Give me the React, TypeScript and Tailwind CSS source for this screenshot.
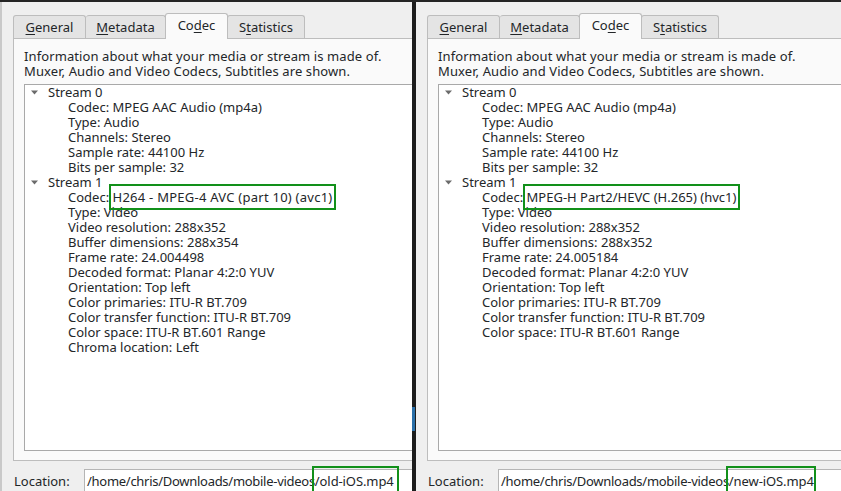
import React from "react";

type Row = { label: string; value?: string; boxed?: boolean };

const Arrow = () => (
  <svg width="7" height="5" viewBox="0 0 7 5" className="shrink-0">
    <path d="M0 0.5 L7 0.5 L3.5 4.5 Z" fill="#6b6b6b" />
  </svg>
);

function Tabs() {
  return (
    <div className="flex items-end shrink-0">
      <div className="w-[73px] h-[23px] bg-[#e4e4e4] border border-b-0 border-[#bdbdbd] rounded-t-[3px] flex items-center justify-center pt-[1px]">
        <span>
          <span className="underline underline-offset-2">G</span>eneral
        </span>
      </div>
      <div className="w-[80px] h-[23px] bg-[#e4e4e4] border border-b-0 border-l-0 border-[#bdbdbd] rounded-t-[3px] flex items-center justify-center pt-[1px]">
        <span>
          <span className="underline underline-offset-2">M</span>etadata
        </span>
      </div>
      <div className="relative z-10 w-[63px] h-[26px] -mb-px bg-[#fafafa] border border-b-0 border-[#bdbdbd] rounded-t-[3px] flex items-center justify-center pb-[2px] mx-[-1px]">
        <span>
          Co<span className="underline underline-offset-2">d</span>ec
        </span>
      </div>
      <div className="w-[78px] h-[23px] bg-[#e4e4e4] border border-b-0 border-[#bdbdbd] rounded-t-[3px] flex items-center justify-center pt-[1px]">
        <span>
          S<span className="underline underline-offset-2">t</span>atistics
        </span>
      </div>
    </div>
  );
}

function Stream({ title, rows, boxSpacing }: { title: string; rows: Row[]; boxSpacing: string }) {
  return (
    <div className="flex flex-col">
      <div className="flex items-center h-[15px] pl-[6px]">
        <Arrow />
        <span className="ml-[10px] whitespace-nowrap">{title}</span>
      </div>
      {rows.map((r, i) => (
        <div key={i} className="h-[15px] pl-[43px] whitespace-nowrap flex items-center">
          <span>{r.label}:&nbsp;</span>
          {r.boxed ? (
            <span className={"relative " + boxSpacing}>
              {r.value}
              <span className="absolute left-[-4px] right-[-4px] top-[-4px] bottom-[-3px] border-2 border-[#12901a]" />
            </span>
          ) : (
            <span>{r.value}</span>
          )}
        </div>
      ))}
    </div>
  );
}

function Window({
  leftBorder,
  codec,
  buffer,
  frame,
  chroma,
  file,
  className,
  boxSpacing,
  fileBox,
}: {
  leftBorder: boolean;
  codec: string;
  buffer: string;
  frame: string;
  chroma: boolean;
  file: string;
  className: string;
  boxSpacing: string;
  fileBox: string;
}) {
  const audio: Row[] = [
    { label: "Codec", value: "MPEG AAC Audio (mp4a)" },
    { label: "Type", value: "Audio" },
    { label: "Channels", value: "Stereo" },
    { label: "Sample rate", value: "44100 Hz" },
    { label: "Bits per sample", value: "32" },
  ];
  const video: Row[] = [
    { label: "Codec", value: codec, boxed: true },
    { label: "Type", value: "Video" },
    { label: "Video resolution", value: "288x352" },
    { label: "Buffer dimensions", value: buffer },
    { label: "Frame rate", value: frame },
    { label: "Decoded format", value: "Planar 4:2:0 YUV" },
    { label: "Orientation", value: "Top left" },
    { label: "Color primaries", value: "ITU-R BT.709" },
    { label: "Color transfer function", value: "ITU-R BT.709" },
    { label: "Color space", value: "ITU-R BT.601 Range" },
  ];
  if (chroma) video.push({ label: "Chroma location", value: "Left" });

  return (
    <div
      className={
        "bg-[#efefef] flex flex-col pt-[11px] pl-[11px] overflow-hidden " +
        (leftBorder ? "border-l-2 border-[#c9c9c9] " : "") +
        className
      }
    >
      <Tabs />
      <div className="h-[423px] shrink-0 border border-[#bdbdbd] bg-[#fafafa] flex flex-col pt-[10px] pl-[10px] pb-[9px] mr-[-1px]">
        <div className="leading-[15px] whitespace-nowrap tracking-[0.1px]">
          <div>Information about what your media or stream is made of.</div>
          <div>Muxer, Audio and Video Codecs, Subtitles are shown.</div>
        </div>
        <div className="mt-[5px] flex-1 border border-[#a9a9a9] bg-white mr-[-2px]">
          <Stream title="Stream 0" rows={audio} boxSpacing={boxSpacing} />
          <Stream title="Stream 1" rows={video} boxSpacing={boxSpacing} />
        </div>
      </div>
      <div className="mt-[8px] shrink-0 flex items-start">
        <div className="w-[71px] pl-[1px] pt-[5px] leading-[15px]">Location:</div>
        <div className="flex-1 h-[26px] border border-[#b5b5b5] bg-white pl-[2px] pt-[4px] leading-[15px] whitespace-nowrap mr-[-4px]">
          <span className="tracking-[-0.28px]">/home/chris/Downloads/mobile-videos</span>
          <span className="relative tracking-[-0.1px]">
            /{file}
            <span className={"absolute top-[-6px] bottom-[-8px] border-2 border-[#12901a] " + fileBox} />
          </span>
        </div>
      </div>
    </div>
  );
}

export default function App() {
  return (
    <div
      className="w-[841px] h-[491px] overflow-hidden bg-[#242424] pt-[2px] flex flex-col text-[13px] text-[#232629]"
      style={{ fontFamily: '"Noto Sans", "Open Sans", sans-serif' }}
    >
      <div className="flex flex-1 min-h-0">
        <Window
          leftBorder
          className="w-[412px] shrink-0"
          codec="H264 - MPEG-4 AVC (part 10) (avc1)"
          buffer="288x354"
          frame="24.004498"
          chroma
          file="old-iOS.mp4"
          boxSpacing="tracking-[0.25px]"
          fileBox="left-[-3px] right-[-5px]"
        />
        <div className="w-[4px] shrink-0 bg-[#1c1c1c] flex flex-col">
          <div className="h-[405px]" />
          <div className="h-[24px] w-[3px] bg-[#2a6fa8]" />
        </div>
        <Window
          leftBorder={false}
          className="flex-1 min-w-0"
          codec="MPEG-H Part2/HEVC (H.265) (hvc1)"
          buffer="288x352"
          frame="24.005184"
          chroma={false}
          file="new-iOS.mp4"
          boxSpacing=""
          fileBox="left-[-3px] right-[-2px]"
        />
      </div>
    </div>
  );
}
